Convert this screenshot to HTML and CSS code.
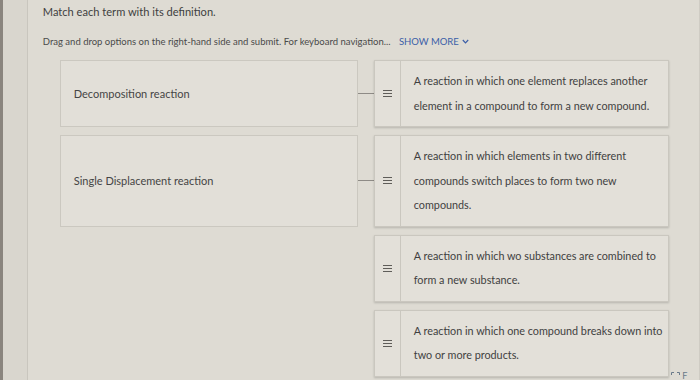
FILE: index.html
```html
<!DOCTYPE html>
<html lang="en">
<head>
    <meta charset="UTF-8">
    <title>Match each term with its definition</title>
    <link rel="stylesheet" href="styles.css">
</head>
<body>
    <div class="edge"></div>
    <div class="gutter"></div>
    <div class="main">
        <p class="prompt">Match each term with its definition.</p>
        <p class="help">Drag and drop options on the right-hand side and submit. For keyboard navigation... <span class="more">SHOW MORE <svg width="7" height="5" viewBox="0 0 7 5"><path d="M0.8 1 L3.5 3.8 L6.2 1" fill="none" stroke="#3b5ea8" stroke-width="1.2"/></svg></span></p>

        <div class="match">
            <!-- term rows -->
            <div class="row">
                <div class="term">Decomposition reaction</div>
                <div class="link"></div>
                <div class="card">
                    <div class="handle"><span></span><span></span><span></span></div>
                    <div class="def">A reaction in which one element replaces another element in a compound to form a new compound.</div>
                </div>
            </div>

            <div class="row">
                <div class="term">Single Displacement reaction</div>
                <div class="link"></div>
                <div class="card">
                    <div class="handle"><span></span><span></span><span></span></div>
                    <div class="def">A reaction in which elements in two different compounds switch places to form two new compounds.</div>
                </div>
            </div>

            <div class="row">
                <div class="term empty"></div>
                <div class="link empty"></div>
                <div class="card">
                    <div class="handle"><span></span><span></span><span></span></div>
                    <div class="def">A reaction in which wo substances are combined to form a new substance.</div>
                </div>
            </div>

            <div class="row">
                <div class="term empty"></div>
                <div class="link empty"></div>
                <div class="card">
                    <div class="handle"><span></span><span></span><span></span></div>
                    <div class="def">A reaction in which one compound breaks down into two or more products.</div>
                </div>
            </div>
        </div>
    </div>
    <div class="fullscreen"><svg width="9" height="7" viewBox="0 0 9 7"><path d="M0.5 3 V0.5 H3 M6 0.5 H8.5 V3" fill="none" stroke="#6a7a8a" stroke-width="1"/></svg> F</div>
</body>
</html>
```

FILE: styles.css
```css
body {
    margin: 0;
    height: 380px;
    overflow: hidden;
    display: flex;
    font-family: Lato, "Open Sans", sans-serif;
    color: #424242;
    background-color: #dedbd3;
}

.edge {
    width: 3px;
    background-color: #8a857e;
}

.gutter {
    width: 24px;
    background-color: #d9d6ce;
    border-right: 1px solid #c9c6be;
}

.main {
    width: 662px;
    padding-left: 15px;
    border-right: 1px solid #cfccc4;
}

.prompt {
    margin: 5px 0 0;
    font-size: 11.1px;
    line-height: 14px;
    color: #3f3f3f;
}

.help {
    margin: 17px 0 0;
    font-size: 9.5px;
    line-height: 12px;
    color: #4a4a4a;
}

.more {
    margin-left: 6px;
    color: #3b5ea8;
}

.more svg {
    margin-left: 1px;
    vertical-align: 1px;
}

/* Matching area */
.match {
    margin: 12px 0 0 17px;
    display: flex;
    flex-direction: column;
    gap: 8px;
}

.row {
    display: flex;
    align-items: stretch;
}

.term {
    width: 283px;
    padding-left: 13px;
    display: flex;
    align-items: center;
    font-size: 11px;
    color: #454545;
    background-color: #e2dfd8;
    border: 1px solid #cbc8c0;
}

.term.empty {
    background: none;
    border-color: transparent;
}

.link {
    width: 16px;
    align-self: center;
    height: 1px;
    background-color: #8e8b86;
}

.link.empty {
    background: none;
}

.card {
    width: 293px;
    display: flex;
    background-color: #e3e0d9;
    border: 1px solid #cac7bf;
    box-shadow: 0 1px 2px rgba(0, 0, 0, 0.18);
}

.handle {
    width: 25px;
    border-right: 1px solid #cac7bf;
    display: flex;
    flex-direction: column;
    align-items: center;
    justify-content: center;
    gap: 2px;
}

.handle span {
    width: 9px;
    height: 1px;
    background-color: #5f5d59;
}

.def {
    flex: 1;
    padding: 8px 2px 8px 13px;
    font-size: 10.8px;
    line-height: 24.5px;
    color: #3f3f3f;
}

.fullscreen {
    position: absolute;
    left: 671px;
    top: 371px;
    font-size: 9px;
    line-height: 10px;
    color: #6a7a8a;
}
```
